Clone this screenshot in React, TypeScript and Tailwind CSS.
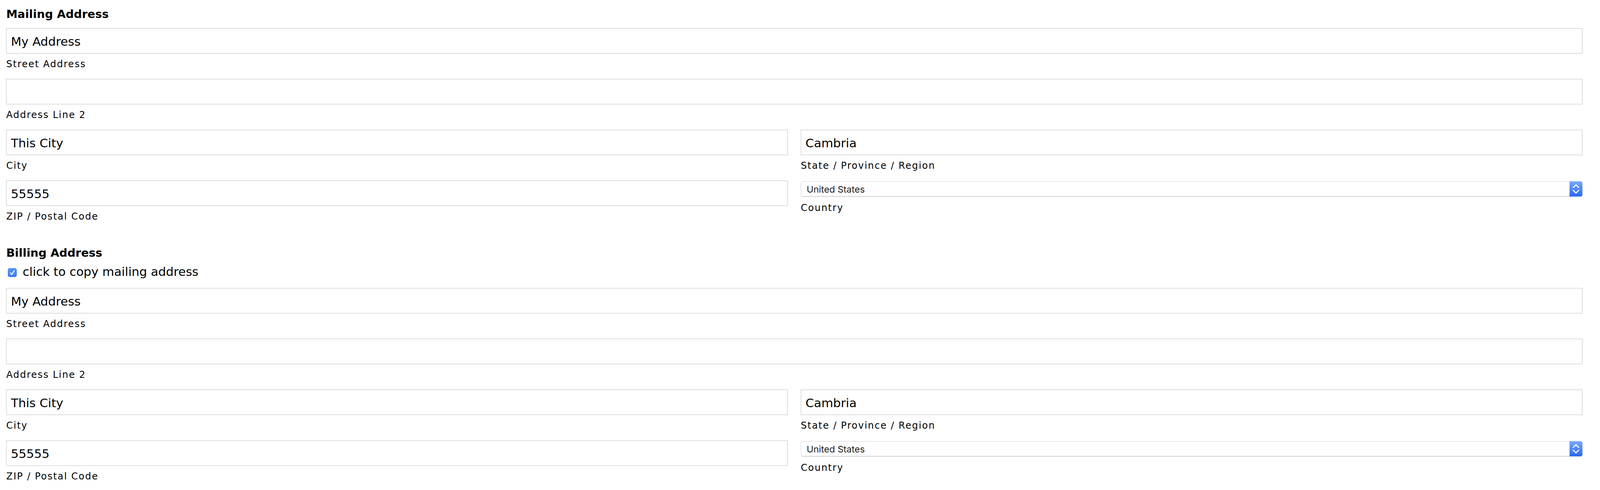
import React from "react";

const FONT = "font-['DejaVu_Sans',Verdana,sans-serif]";

function TextField({ value, label }: { value: string; label: string }) {
  return (
    <div className="flex min-w-0 flex-col">
      <input
        type="text"
        defaultValue={value}
        className={`block w-full min-w-0 h-[65px] border border-[#bfbfbf] bg-white pl-[11px] pt-[3px] text-[31px] text-black outline-none ${FONT}`}
      />
      <label className="mt-[13px] block text-[24px] leading-[28px] tracking-[2px] text-black">{label}</label>
    </div>
  );
}

function CountrySelect({ label }: { label: string }) {
  return (
    <div className="flex min-w-0 flex-col">
      <div className="mt-[2px] flex h-[39px] items-stretch rounded-[5px] border border-[#d3d3d3] border-b-[#b3b3b3] bg-white shadow-[0_1px_1px_rgba(0,0,0,0.05)]">
        <span className="flex flex-1 items-center pl-[14px] pt-[2px] text-[23.5px] text-[#1c1c1c] font-['Inter',sans-serif]">
          United States
        </span>
        <span className="-my-px -mr-px flex w-[33px] shrink-0 items-center justify-center rounded-r-[5px] bg-linear-to-b from-[#7ba8f9] to-[#2a67f5]">
          <svg width="33" height="39" viewBox="0 0 33 39" fill="none">
            <path d="M9.5 16 L16.5 9 L23.5 16" stroke="white" strokeWidth="2.6" strokeLinecap="round" strokeLinejoin="round" />
            <path d="M9.5 23 L16.5 30 L23.5 23" stroke="white" strokeWidth="2.6" strokeLinecap="round" strokeLinejoin="round" />
          </svg>
        </span>
      </div>
      <label className="mt-[15px] block text-[24px] leading-[28px] tracking-[2px] text-black">{label}</label>
    </div>
  );
}

function AddressBlock() {
  return (
    <div className="flex flex-col gap-[24px]">
      <TextField value="My Address" label="Street Address" />
      <TextField value="" label="Address Line 2" />
      <div className="grid grid-cols-2 gap-x-[33px] gap-y-[24px]">
        <TextField value="This City" label="City" />
        <TextField value="Cambria" label="State / Province / Region" />
        <TextField value="55555" label="ZIP / Postal Code" />
        <CountrySelect label="Country" />
      </div>
    </div>
  );
}

export default function App() {
  return (
    <div className={`min-h-[1254px] w-full bg-white ${FONT} text-black`}>
      <div className="pl-[16px] pr-[45px] pt-[19px]">
        <section>
          <h2 className="mb-[19px] text-[29px] font-bold leading-[34px]">Mailing Address</h2>
          <AddressBlock />
        </section>
        <section className="mt-[62px]">
          <h2 className="text-[29px] font-bold leading-[34px]">Billing Address</h2>
          <div className="mb-[24px] mt-[13px] flex items-center">
            <span className="ml-[4px] mt-[5px] flex h-[23px] w-[23px] items-center justify-center rounded-[5px] bg-linear-to-b from-[#5b95f7] to-[#3a7bf3]">
              <svg width="23" height="23" viewBox="0 0 23 23" fill="none">
                <path d="M6.5 12.2 L10 16.5 L16.5 6.8" stroke="white" strokeWidth="2.4" strokeLinecap="round" strokeLinejoin="round" />
              </svg>
            </span>
            <span className="ml-[15px] text-[31px] leading-[36px]">click to copy mailing address</span>
          </div>
          <AddressBlock />
        </section>
      </div>
    </div>
  );
}
